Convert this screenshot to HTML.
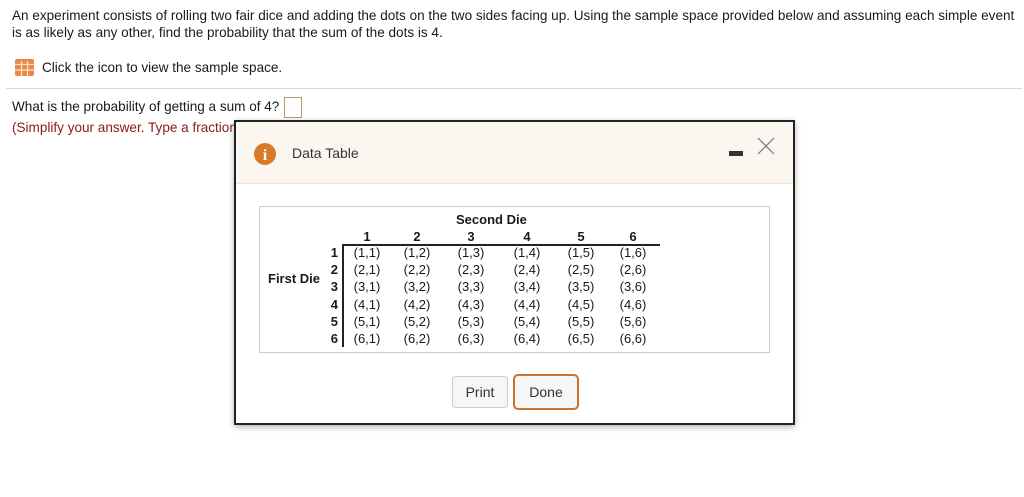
<!DOCTYPE html>
<html><head><meta charset="utf-8"><style>
*{margin:0;padding:0;box-sizing:border-box}
body{width:1024px;height:497px;background:#fff;font-family:"Liberation Sans",Arial,sans-serif;color:#1a1a1a;position:relative;overflow:hidden;font-size:13.55px}
.a{position:absolute;white-space:nowrap}
.c{position:absolute;width:56px;text-align:center;font-size:13px;line-height:17px}
.b{font-weight:bold}
</style></head><body>
<div class="a" style="left:12px;top:7px;line-height:17px">An experiment consists of rolling two fair dice and adding the dots on the two sides facing up. Using the sample space provided below and assuming each simple event<br>is as likely as any other, find the probability that the sum of the dots is 4.</div>
<svg class="a" style="left:15px;top:59px" width="19" height="17" viewBox="0 0 19 17"><rect x="0" y="0" width="19" height="17" rx="2" fill="#e8894a"/><g stroke="#fbe3d0" stroke-width="1.2"><line x1="0" y1="5.5" x2="19" y2="5.5"/><line x1="0" y1="11" x2="19" y2="11"/><line x1="6.5" y1="2" x2="6.5" y2="17"/><line x1="12.5" y1="2" x2="12.5" y2="17"/></g></svg>
<div class="a" style="left:42px;top:59px;line-height:17px">Click the icon to view the sample space.</div>
<div class="a" style="left:6px;top:88px;width:1016px;height:1px;background:#d8d8d8"></div>
<div class="a" style="left:12px;top:98px;line-height:17px">What is the probability of getting a sum of 4?</div>
<div class="a" style="left:284px;top:97px;width:18px;height:21px;border:1px solid #b59a6a;background:#fff"></div>
<div class="a" style="left:12px;top:119px;line-height:17px;color:#8b1a1a">(Simplify your answer. Type a fraction</div>

<div class="a" style="left:234px;top:120px;width:561px;height:305px;border:2px solid #222;background:#fff;box-shadow:0 2px 6px rgba(0,0,0,.3)">
 <div class="a" style="left:0;top:0;width:557px;height:62px;background:#fcf6f0;border-bottom:1px solid #f3e2cc"></div>
 <svg class="a" style="left:18px;top:21px" width="22" height="22"><circle cx="11" cy="11" r="11" fill="#d77a2a"/><text x="11" y="17" text-anchor="middle" fill="#fff" font-family="Liberation Serif,serif" font-weight="bold" font-size="16">i</text></svg>
 <div class="a" style="left:56px;top:23px;line-height:17px;font-size:14px;color:#333">Data Table</div>
 <div class="a" style="left:493px;top:29px;width:14px;height:5px;background:#333"></div>
 <svg class="a" style="left:521px;top:15px" width="18" height="18"><path d="M1 1L17 17M17 1L1 17" stroke="#777" stroke-width="1.2"/></svg>
 <div class="a" style="left:23px;top:84px;width:511px;height:147px;border:1px solid #ccc"></div>
 <div class="a" style="left:106px;top:122px;width:1.5px;height:103px;background:#222"></div>
 <div class="a" style="left:106px;top:122px;width:318px;height:1.5px;background:#222"></div>
</div>
<div class="a b" style="left:456px;top:211px;font-size:13px;line-height:17px">Second Die</div>
<div class="a b" style="left:268px;top:270px;font-size:13px;line-height:17px">First Die</div>
<div style="position:absolute;left:0;top:0">
<div class="c b" style="left:339px;top:228px">1</div><div class="c b" style="left:389px;top:228px">2</div><div class="c b" style="left:443px;top:228px">3</div><div class="c b" style="left:499px;top:228px">4</div><div class="c b" style="left:553px;top:228px">5</div><div class="c b" style="left:605px;top:228px">6</div>
</div>
<div class="a b" style="left:328px;top:244px;font-size:13px;line-height:17.2px;text-align:right;width:10px">1<br>2<br>3<br>4<br>5<br>6</div>
<div class="a" style="left:339px;top:244px;font-size:13px;line-height:17.2px;width:56px;text-align:center">(1,1)<br>(2,1)<br>(3,1)<br>(4,1)<br>(5,1)<br>(6,1)</div>
<div class="a" style="left:389px;top:244px;font-size:13px;line-height:17.2px;width:56px;text-align:center">(1,2)<br>(2,2)<br>(3,2)<br>(4,2)<br>(5,2)<br>(6,2)</div>
<div class="a" style="left:443px;top:244px;font-size:13px;line-height:17.2px;width:56px;text-align:center">(1,3)<br>(2,3)<br>(3,3)<br>(4,3)<br>(5,3)<br>(6,3)</div>
<div class="a" style="left:499px;top:244px;font-size:13px;line-height:17.2px;width:56px;text-align:center">(1,4)<br>(2,4)<br>(3,4)<br>(4,4)<br>(5,4)<br>(6,4)</div>
<div class="a" style="left:553px;top:244px;font-size:13px;line-height:17.2px;width:56px;text-align:center">(1,5)<br>(2,5)<br>(3,5)<br>(4,5)<br>(5,5)<br>(6,5)</div>
<div class="a" style="left:605px;top:244px;font-size:13px;line-height:17.2px;width:56px;text-align:center">(1,6)<br>(2,6)<br>(3,6)<br>(4,6)<br>(5,6)<br>(6,6)</div>

<div class="a" style="left:452px;top:376px;width:56px;height:32px;border:1px solid #ccc;border-radius:4px;background:#f6f6f6;text-align:center;line-height:30px;color:#333;font-size:14px">Print</div>
<div class="a" style="left:513px;top:374px;width:66px;height:36px;border:2px solid #c8742a;border-radius:5px;background:#f6f6f6;text-align:center;line-height:32px;color:#333;font-size:14px">Done</div>
</body></html>
